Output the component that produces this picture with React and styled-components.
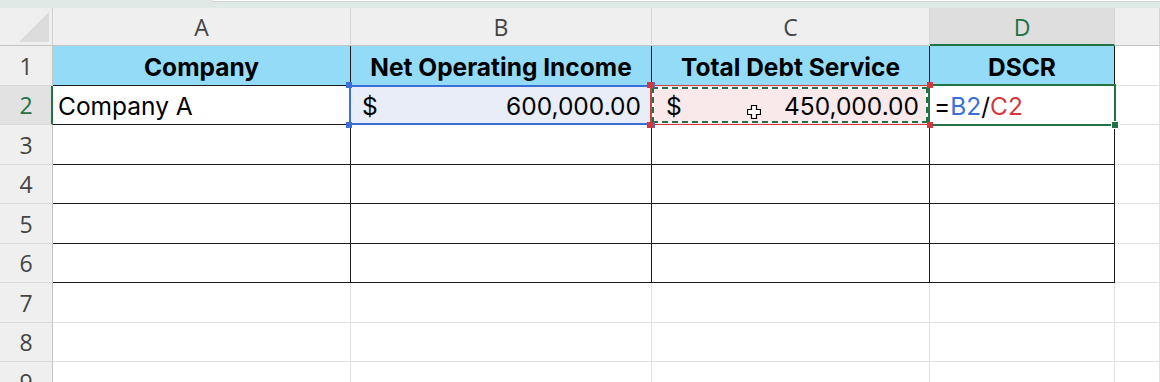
import React from 'react';
import styled, { createGlobalStyle } from 'styled-components';

const GREEN = '#217346';
const BLUE = '#3c6fd6';
const RED = '#d1393f';

const Global = createGlobalStyle`
  html, body { margin: 0; padding: 0; background: #fff; }
  body { width: 1160px; height: 382px; overflow: hidden; }
  * { box-sizing: border-box; }
`;

const Page = styled.div`
  width: 1160px;
  height: 382px;
  overflow: hidden;
  background: #fff;
  display: flex;
  flex-direction: column;
`;

const TopStrip = styled.div`
  height: 8px;
  flex: none;
  background: #dfe9e6;
  display: flex;
  align-items: flex-start;
  padding-left: 212px;
`;

const FormulaBarEdge = styled.div`
  flex: 1;
  height: 2px;
  background: #fff;
  border-bottom: 1px solid #cfd6d4;
  border-left: 1px solid #cfd6d4;
  border-bottom-left-radius: 2px;
`;

const Sheet = styled.div`
  display: grid;
  grid-template-columns: 53px 298px 301px 278px 185px 1fr;
  grid-template-rows: 38px repeat(9, 39.5px);
  font-family: Inter, "Open Sans", sans-serif;
`;

const Corner = styled.div`
  background: #efefef;
  border-right: 1px solid #cfcfcf;
  border-bottom: 1px solid #c4c4c4;
  position: relative;
  &::after {
    content: '';
    position: absolute;
    right: 3px;
    bottom: 3px;
    width: 30px;
    height: 30px;
    background: #dcdcdc;
    clip-path: polygon(100% 0, 100% 100%, 0 100%);
  }
`;

const ColHead = styled.div`
  background: ${p => (p.$active ? '#dedede' : '#efefef')};
  border-right: 1px solid #d6d6d6;
  border-bottom: ${p => (p.$active ? `2px solid ${GREEN}` : '1px solid #c4c4c4')};
  color: ${p => (p.$active ? GREEN : '#444')};
  font-family: "Open Sans", "Noto Sans", sans-serif;
  font-size: 23px;
  display: flex;
  align-items: center;
  justify-content: center;
  padding-top: ${p => (p.$active ? '2px' : '1px')};
`;

const RowHead = styled.div`
  background: ${p => (p.$active ? '#e2e2e2' : '#efefef')};
  border-right: ${p => (p.$active ? `2px solid ${GREEN}` : '1px solid #c4c4c4')};
  border-bottom: 1px solid #dadada;
  color: ${p => (p.$active ? GREEN : '#444')};
  font-family: "Open Sans", "Noto Sans", sans-serif;
  font-size: 23px;
  display: flex;
  align-items: center;
  justify-content: center;
  padding-left: ${p => (p.$active ? '1px' : '0')};
  padding-top: 1px;
`;

const Cell = styled.div`
  position: relative;
  background: ${p => p.$fill || '#fff'};
  border-right: 1px solid ${p => (p.$table ? '#1b1b1b' : '#e1e1e1')};
  border-bottom: 1px solid ${p => (p.$table ? '#1b1b1b' : '#e1e1e1')};
  display: flex;
  align-items: center;
  justify-content: ${p => p.$justify || 'flex-start'};
  padding: ${p => p.$pad || '3px 5px 0'};
  font-size: 24.5px;
  font-weight: ${p => (p.$bold ? 700 : 400)};
  color: #000;
  white-space: nowrap;
`;

const RefBox = styled.div`
  position: absolute;
  z-index: 2;
  inset: -1px -1px -1px -2px;
  border: ${p => p.$w}px solid ${p => p.$color};
  pointer-events: none;
`;

const Handle = styled.span`
  position: absolute;
  z-index: 3;
  width: 6px;
  height: 6px;
  background: ${p => p.$color};
  ${p => (p.$top ? 'top: -4px;' : 'bottom: -4px;')}
  ${p => (p.$left ? 'left: -5px;' : 'right: -4px;')}
`;

const Ants = styled.div`
  position: absolute;
  z-index: 2;
  inset: 1px 1px 1px 0;
  border: 2px solid #fff;
  pointer-events: none;
  &::after {
    content: '';
    position: absolute;
    inset: -2px;
    border: 2px dashed ${GREEN};
  }
`;

const ActiveBox = styled.div`
  position: absolute;
  z-index: 2;
  inset: -2px -2px -2px -2px;
  border: 2px solid ${GREEN};
  pointer-events: none;
`;

const FillHandle = styled.span`
  position: absolute;
  right: -4px;
  bottom: -4px;
  width: 6px;
  height: 6px;
  background: ${GREEN};
  outline: 1px solid #fff;
`;

const Ref = styled.span`
  color: ${p => p.$color || '#000'};
`;

const Cursor = styled.svg`
  position: absolute;
  z-index: 4;
  left: 95px;
  top: 19px;
  width: 14px;
  height: 14px;
  pointer-events: none;
`;

const cols = ['A', 'B', 'C', 'D', 'E'];

function Refs({ color, w = 2 }) {
  return (
    <>
      <RefBox $color={color} $w={w} />
      <Handle $color={color} $top $left />
      <Handle $color={color} $top />
      <Handle $color={color} $left />
      <Handle $color={color} />
    </>
  );
}

export default function App() {
  const LB = '#94dbf7';
  const rows = [];
  for (let r = 1; r <= 9; r++) {
    const table = r <= 6;
    rows.push(
      <RowHead key={`h${r}`} $active={r === 2}>{r}</RowHead>
    );
    if (r === 1) {
      rows.push(
        <Cell key="a1" $table $fill={LB} $bold $justify="center">Company</Cell>,
        <Cell key="b1" $table $fill={LB} $bold $justify="center">Net Operating Income</Cell>,
        <Cell key="c1" $table $fill={LB} $bold $justify="center">Total Debt Service</Cell>,
        <Cell key="d1" $table $fill={LB} $bold $justify="center">DSCR</Cell>,
        <Cell key="e1" />
      );
    } else if (r === 2) {
      rows.push(
        <Cell key="a2" $table>Company A</Cell>,
        <Cell key="b2" $table $fill="#e9edf8" $justify="space-between" $pad="3px 10px 0 11px">
          <span>$</span>
          <span>600,000.00</span>
          <Refs color={BLUE} />
        </Cell>,
        <Cell key="c2" $table $fill="#f9e9ea" $justify="space-between" $pad="3px 10px 0 14px">
          <span>$</span>
          <span>450,000.00</span>
          <Refs color={RED} w={1} />
          <Ants />
          <Cursor viewBox="0 0 14 14">
            <path
              d="M4.5 0.5 H9.5 V4.5 H13.5 V9.5 H9.5 V13.5 H4.5 V9.5 H0.5 V4.5 H4.5 Z"
              fill="#fff"
              stroke="#000"
              strokeWidth="1.2"
            />
          </Cursor>
        </Cell>,
        <Cell key="d2" $table $pad="3px 4px 0">
          <Ref>=</Ref><Ref $color={BLUE}>B2</Ref><Ref>/</Ref><Ref $color={RED}>C2</Ref>
          <ActiveBox><FillHandle /></ActiveBox>
        </Cell>,
        <Cell key="e2" />
      );
    } else {
      ['a', 'b', 'c', 'd'].forEach(c =>
        rows.push(<Cell key={`${c}${r}`} $table={table} />)
      );
      rows.push(<Cell key={`e${r}`} />);
    }
  }

  return (
    <Page>
      <Global />
      <TopStrip><FormulaBarEdge /></TopStrip>
      <Sheet>
        <Corner />
        {cols.map(c => (
          <ColHead key={c} $active={c === 'D'}>{c === 'E' ? '' : c}</ColHead>
        ))}
        {rows}
      </Sheet>
    </Page>
  );
}
